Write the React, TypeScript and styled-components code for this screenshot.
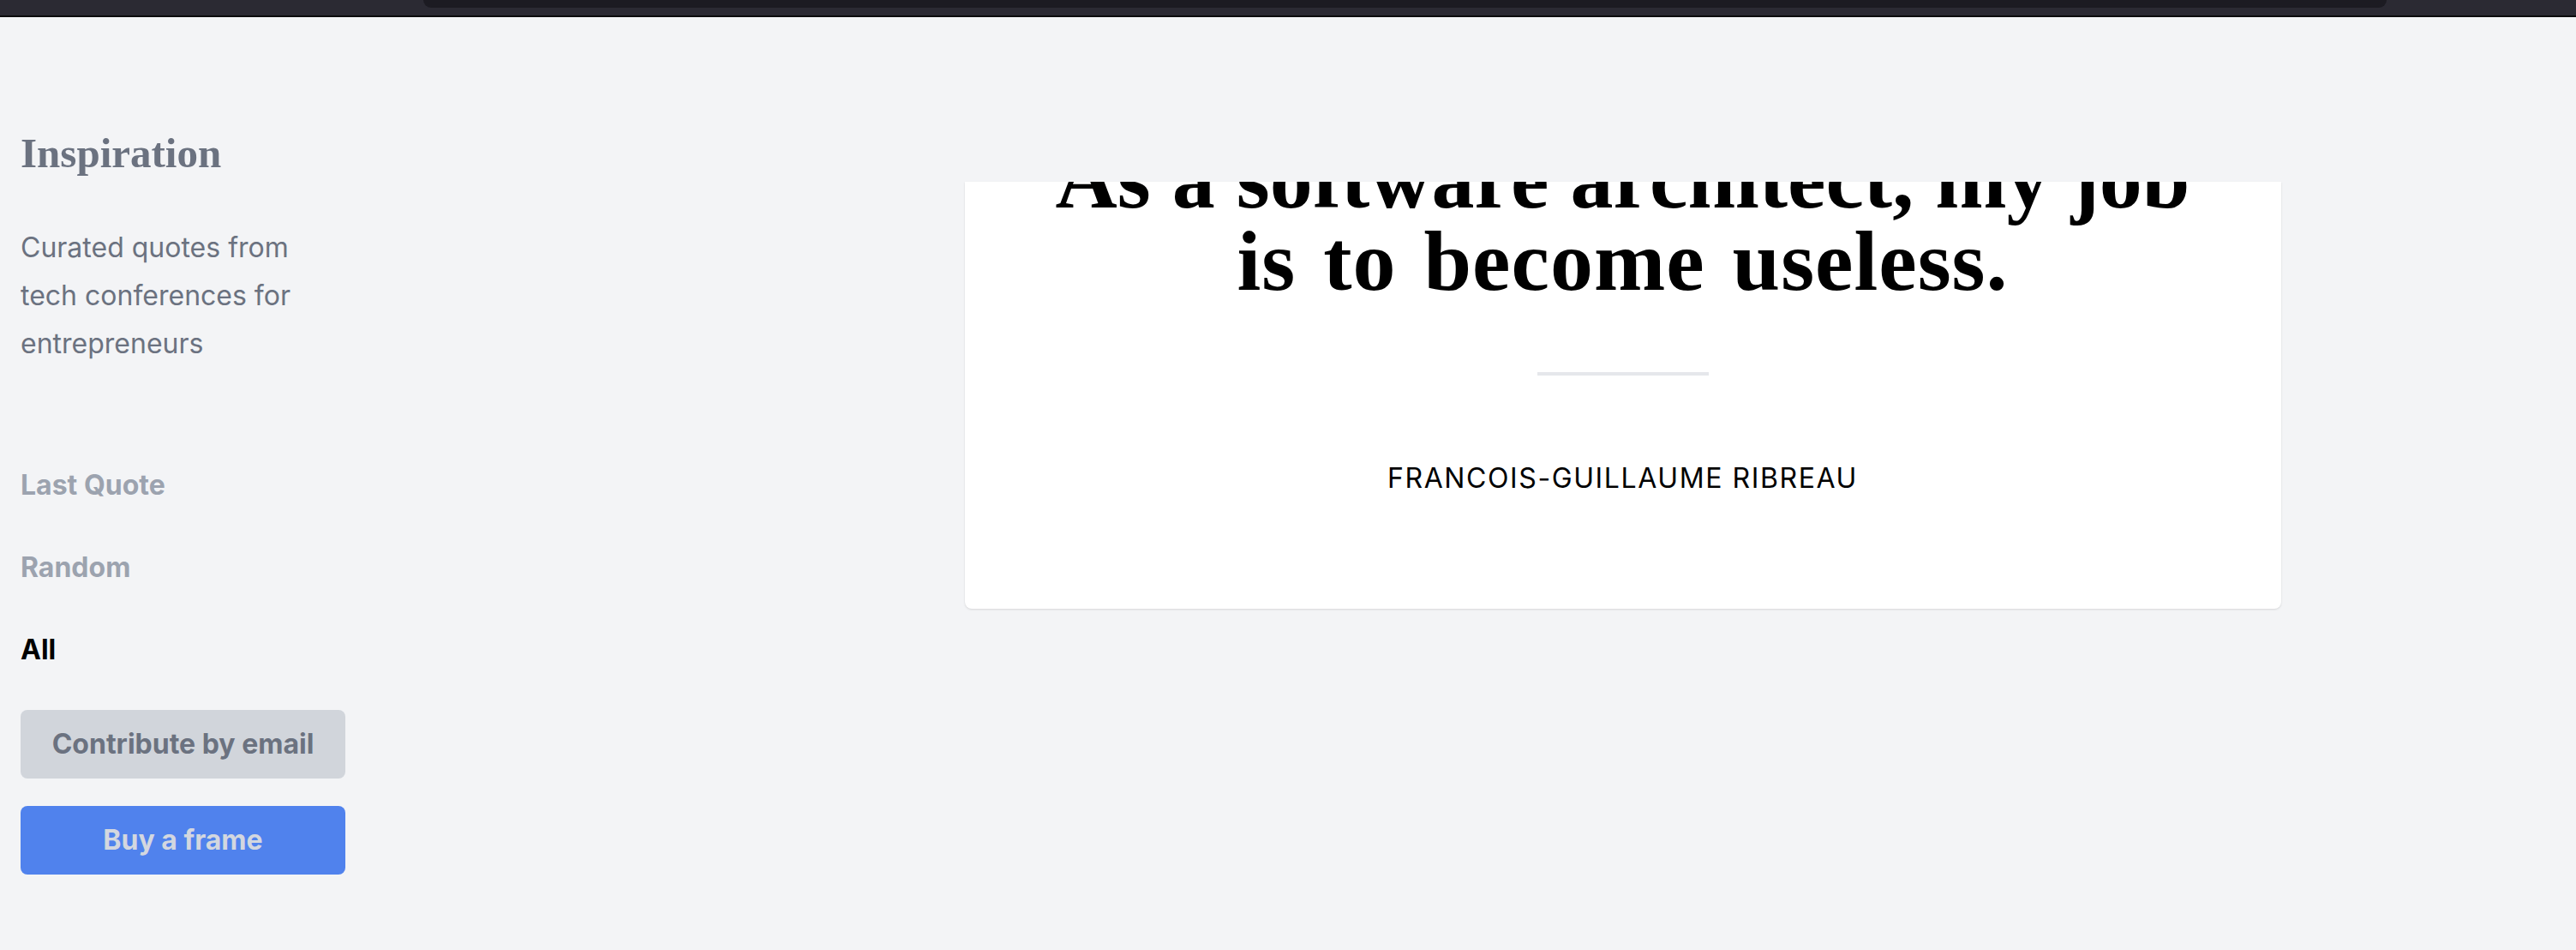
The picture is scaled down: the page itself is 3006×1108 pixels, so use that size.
import React from "react";
import styled, { createGlobalStyle } from "styled-components";

const Global = createGlobalStyle`
  html, body {
    margin: 0;
    padding: 0;
    background: #f3f4f6;
    width: 3006px;
    height: 1108px;
    overflow: hidden;
  }
  * { box-sizing: border-box; }
`;

const Page = styled.div`
  width: 3006px;
  height: 1108px;
  display: flex;
  flex-direction: column;
  background: #f3f4f6;
`;

const BrowserBar = styled.div`
  height: 20px;
  background: #2b2a33;
  border-bottom: 2px solid #0c0c0d;
  padding-left: 494px;
  padding-right: 221px;
  flex: none;
`;

const BrowserTab = styled.div`
  height: 9px;
  background: #1c1b22;
  border-radius: 0 0 10px 10px;
`;

const Body = styled.div`
  flex: 1;
  display: flex;
  min-height: 0;
`;

const Sidebar = styled.aside`
  flex: 0 0 781px;
  padding: 127px 0 0 24px;
  display: flex;
  flex-direction: column;
  align-items: flex-start;
`;

const Title = styled.h1`
  margin: 0;
  font-family: "Liberation Serif", "DejaVu Serif", serif;
  font-weight: 700;
  font-size: 49px;
  line-height: 64px;
  color: #6b7280;
`;

const Tagline = styled.p`
  margin: 50px 0 0;
  font-family: Inter, "Noto Sans", sans-serif;
  font-size: 32px;
  line-height: 56px;
  color: #6b7280;
`;

const Nav = styled.nav`
  margin-top: 113px;
  display: flex;
  flex-direction: column;
  gap: 48px;
`;

const NavItem = styled.a<{ $active?: boolean }>`
  font-family: Inter, "Noto Sans", sans-serif;
  font-weight: 700;
  font-size: 32px;
  line-height: 48px;
  color: ${(p) => (p.$active ? "#000000" : "#9ca3af")};
  text-decoration: none;
`;

const Actions = styled.div`
  margin-top: 46px;
  width: 379px;
  display: flex;
  flex-direction: column;
  gap: 32px;
`;

const Button = styled.button<{ $primary?: boolean }>`
  display: block;
  width: 100%;
  border: none;
  border-radius: 8px;
  padding: 16px 32px;
  font-family: Inter, "Noto Sans", sans-serif;
  font-weight: 700;
  font-size: 32px;
  line-height: 48px;
  text-align: center;
  white-space: nowrap;
  background: ${(p) => (p.$primary ? "#5082ed" : "#d1d5db")};
  color: ${(p) => (p.$primary ? "#d3d7df" : "#6b7280")};
`;

const Main = styled.main`
  flex: 1;
  display: flex;
  justify-content: center;
  align-items: flex-start;
  padding-top: 192px;
`;

const Card = styled.article`
  width: 1536px;
  height: 498px;
  background: #ffffff;
  border-radius: 0 0 8px 8px;
  box-shadow: 0 1px 3px rgba(0, 0, 0, 0.08), 0 1px 2px rgba(0, 0, 0, 0.05);
  overflow: hidden;
  display: flex;
  flex-direction: column;
  align-items: center;
`;

const Quote = styled.blockquote`
  margin: -51px 0 0;
  font-family: "Liberation Serif", "DejaVu Serif", serif;
  font-weight: 700;
  font-size: 100px;
  line-height: 96px;
  color: #000000;
  text-align: center;
`;

const QuoteLine = styled.span<{ $loose?: boolean }>`
  display: block;
  word-spacing: ${(p) => (p.$loose ? 6 : 0)}px;
  letter-spacing: ${(p) => (p.$loose ? 1 : 0)}px;
`;

const Divider = styled.hr`
  margin: 81px 0 0;
  width: 200px;
  height: 4px;
  border: none;
  background: #e5e7eb;
`;

const Author = styled.p`
  margin: 96px 0 0;
  font-family: Inter, "Noto Sans", sans-serif;
  font-size: 32px;
  line-height: 48px;
  letter-spacing: 1.6px;
  text-transform: uppercase;
  color: #000000;
`;

export default function App() {
  return (
    <Page>
      <Global />
      <BrowserBar>
        <BrowserTab />
      </BrowserBar>
      <Body>
        <Sidebar>
          <Title>Inspiration</Title>
          <Tagline>
            Curated quotes from
            <br />
            tech conferences for
            <br />
            entrepreneurs
          </Tagline>
          <Nav>
            <NavItem href="#">Last Quote</NavItem>
            <NavItem href="#">Random</NavItem>
            <NavItem href="#" $active>
              All
            </NavItem>
          </Nav>
          <Actions>
            <Button>Contribute by email</Button>
            <Button $primary>Buy a frame</Button>
          </Actions>
        </Sidebar>
        <Main>
          <Card>
            <Quote>
              <QuoteLine>As a software architect, my job</QuoteLine>
              <QuoteLine $loose>is to become useless.</QuoteLine>
            </Quote>
            <Divider />
            <Author>Francois-Guillaume Ribreau</Author>
          </Card>
        </Main>
      </Body>
    </Page>
  );
}
